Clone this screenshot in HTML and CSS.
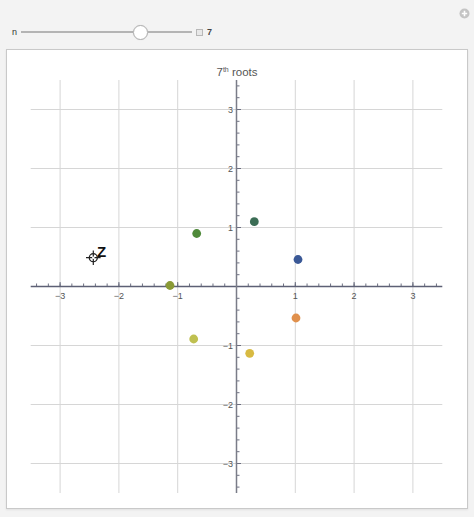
FILE: index.html
```html
<!DOCTYPE html>
<html>
<head>
<meta charset="utf-8">
<link rel="stylesheet" href="styles.css">
</head>
<body>
<div class="app">
  <div class="topbar">
    <div class="gear-row">
      <svg class="gear" width="11" height="11" viewBox="0 0 11 11">
        <circle cx="5.5" cy="5.5" r="5" fill="#c4c4c4"/>
        <path d="M5.5 2.8v5.4M2.8 5.5h5.4" stroke="#fff" stroke-width="1.6"/>
      </svg>
    </div>
    <div class="controls">
      <span class="label">n</span>
      <div class="slider">
        <div class="track track-a"></div>
        <div class="thumb"></div>
        <div class="track track-b"></div>
      </div>
      <span class="plusbox"></span>
      <span class="value">7</span>
    </div>
  </div>
  <div class="plot">
    <svg width="460" height="458" viewBox="7 50 460 458">
      <defs>
        <pattern id="xt" x="236" y="0" width="11.76" height="600" patternUnits="userSpaceOnUse">
          <rect x="0" y="0" width="1" height="600" fill="#6b6e80"/>
        </pattern>
        <pattern id="yt" x="0" y="286" width="600" height="11.8" patternUnits="userSpaceOnUse">
          <rect x="0" y="0" width="600" height="1" fill="#6b6e80"/>
        </pattern>
      </defs>
      <g stroke="#d6d6d6" stroke-width="1">
        <line x1="60.1" y1="80" x2="60.1" y2="493"/>
        <line x1="118.9" y1="80" x2="118.9" y2="493"/>
        <line x1="177.7" y1="80" x2="177.7" y2="493"/>
        <line x1="295.3" y1="80" x2="295.3" y2="493"/>
        <line x1="354.1" y1="80" x2="354.1" y2="493"/>
        <line x1="412.9" y1="80" x2="412.9" y2="493"/>
        <line x1="30.7" y1="109.5" x2="442.3" y2="109.5"/>
        <line x1="30.7" y1="168.5" x2="442.3" y2="168.5"/>
        <line x1="30.7" y1="227.5" x2="442.3" y2="227.5"/>
        <line x1="30.7" y1="345.5" x2="442.3" y2="345.5"/>
        <line x1="30.7" y1="404.5" x2="442.3" y2="404.5"/>
        <line x1="30.7" y1="463.5" x2="442.3" y2="463.5"/>
      </g>
      <rect x="31" y="283.5" width="411" height="3" fill="url(#xt)"/>
      <rect x="236.5" y="81" width="3" height="411" fill="url(#yt)"/>
      <g stroke="#6b6e80" stroke-width="1">
        <line x1="60.1" y1="282" x2="60.1" y2="286"/>
        <line x1="118.9" y1="282" x2="118.9" y2="286"/>
        <line x1="177.7" y1="282" x2="177.7" y2="286"/>
        <line x1="295.3" y1="282" x2="295.3" y2="286"/>
        <line x1="354.1" y1="282" x2="354.1" y2="286"/>
        <line x1="412.9" y1="282" x2="412.9" y2="286"/>
        <line x1="237" y1="109.5" x2="241" y2="109.5"/>
        <line x1="237" y1="168.5" x2="241" y2="168.5"/>
        <line x1="237" y1="227.5" x2="241" y2="227.5"/>
        <line x1="237" y1="345.5" x2="241" y2="345.5"/>
        <line x1="237" y1="404.5" x2="241" y2="404.5"/>
        <line x1="237" y1="463.5" x2="241" y2="463.5"/>
      </g>
      <line x1="30.7" y1="286.5" x2="442.3" y2="286.5" stroke="#5d6075" stroke-width="1.5"/>
      <line x1="236.5" y1="80" x2="236.5" y2="493" stroke="#7a7c88" stroke-width="1.5"/>
      <g class="ticklbl" text-anchor="middle">
        <text x="60.1" y="298.5">−3</text>
        <text x="118.9" y="298.5">−2</text>
        <text x="177.7" y="298.5">−1</text>
        <text x="295.3" y="298.5">1</text>
        <text x="354.1" y="298.5">2</text>
        <text x="412.9" y="298.5">3</text>
      </g>
      <g class="ticklbl" text-anchor="end">
        <text x="233" y="112.7">3</text>
        <text x="233" y="171.7">2</text>
        <text x="233" y="230.7">1</text>
        <text x="233" y="348.7">−1</text>
        <text x="233" y="407.7">−2</text>
        <text x="233" y="466.7">−3</text>
      </g>
      <text class="title" x="216.5" y="76">7<tspan class="sup" dy="-4">th</tspan><tspan dy="4"> roots</tspan></text>
      <circle cx="196.7" cy="233.5" r="4.4" fill="#4f8a3a"/>
      <circle cx="254.3" cy="221.7" r="4.4" fill="#3b6d55"/>
      <circle cx="298" cy="259.5" r="4.4" fill="#3a5896"/>
      <circle cx="296" cy="318" r="4.4" fill="#e0904c"/>
      <circle cx="249.7" cy="353.3" r="4.4" fill="#d8ba42"/>
      <circle cx="193.7" cy="339" r="4.4" fill="#bfc050"/>
      <circle cx="170" cy="285.5" r="4.4" fill="#8a9a36"/>
      <g class="locator">
        <circle cx="93.3" cy="257.7" r="4" fill="#fff" stroke="#222" stroke-width="1.3"/>
        <path d="M86 257.7h14.6M93.3 250.4v14.6" stroke="#222" stroke-width="1.2"/>
        <circle cx="93.3" cy="257.7" r="1.3" fill="#fff"/>
      </g>
      <text class="zlabel" x="97" y="256.5">Z</text>
    </svg>
  </div>
</div>
</body>
</html>
```

FILE: styles.css
```css
html, body {
  margin: 0;
  padding: 0;
}
body {
  background: #f3f3f3;
  font-family: "Liberation Sans", Arial, sans-serif;
}
.app {
  width: 474px;
  height: 517px;
  background: #f3f3f3;
  display: flex;
  flex-direction: column;
}
.topbar {
  height: 49px;
  box-sizing: border-box;
  padding: 8px 4px 0 12px;
  display: flex;
  flex-direction: column;
}
.gear-row {
  height: 12px;
  display: flex;
  justify-content: flex-end;
}
.gear {
  display: block;
  margin-right: 0.5px;
}
.controls {
  margin-top: 4px;
  height: 16px;
  display: flex;
  align-items: center;
}
.label {
  font-size: 9px;
  color: #333;
  width: 9px;
  line-height: 16px;
}
.slider {
  width: 171px;
  height: 16px;
  display: flex;
  align-items: center;
}
.track {
  height: 2px;
  background: #b4b4b4;
}
.track-a {
  width: 112px;
}
.track-b {
  flex: 1;
}
.thumb {
  width: 13px;
  height: 13px;
  border-radius: 50%;
  border: 1px solid #b0b0b0;
  background: #fff;
  box-shadow: 0 0 1px rgba(0,0,0,0.15);
}
.plusbox {
  width: 5px;
  height: 5px;
  border: 1px solid #b8b8b8;
  background: #e8e8e8;
  margin-left: 4px;
}
.value {
  font-size: 9px;
  font-weight: bold;
  color: #444;
  margin-left: 4px;
}
.plot {
  margin: 0 6px;
  width: 462px;
  height: 460px;
  box-sizing: border-box;
  border: 1px solid #c9c9c9;
  background: #fff;
  box-shadow: 0 1px 2px rgba(0,0,0,0.08);
}
.plot svg {
  display: block;
}
.ticklbl text {
  font-family: "Liberation Sans", Arial, sans-serif;
  font-size: 9px;
  fill: #555;
}
.title {
  font-family: "Liberation Sans", Arial, sans-serif;
  font-size: 11.5px;
  fill: #555;
}
.sup {
  font-size: 7px;
}
.zlabel {
  font-family: "Liberation Sans", Arial, sans-serif;
  font-size: 15px;
  font-weight: bold;
  fill: #111;
}
```
